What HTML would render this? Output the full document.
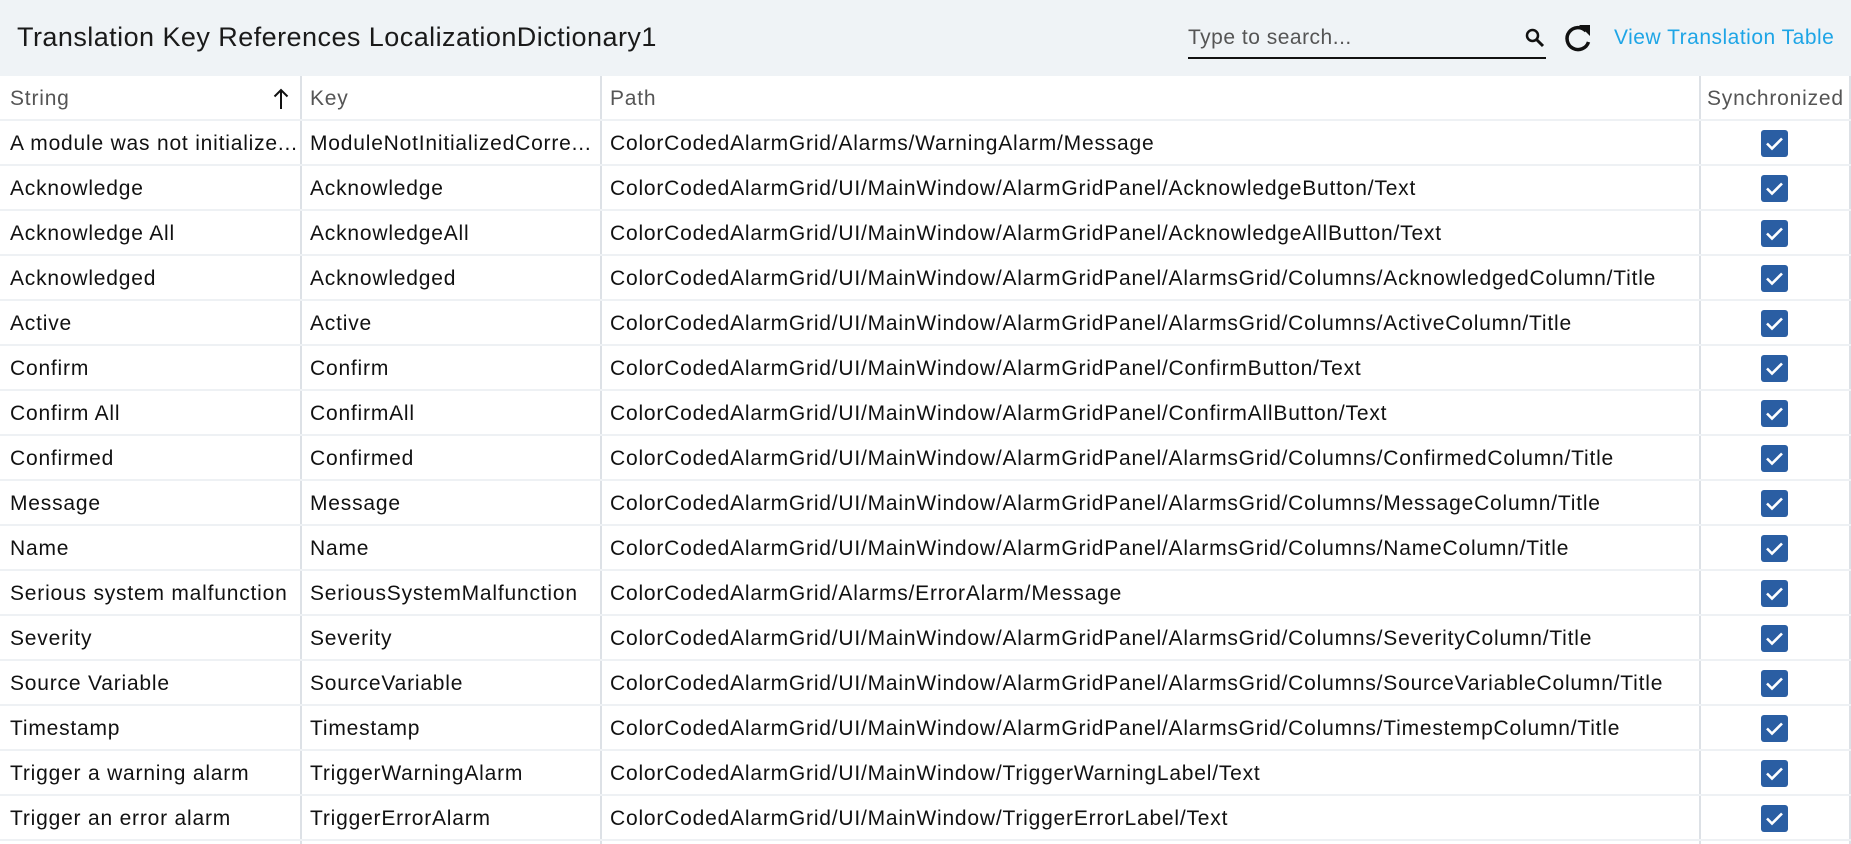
<!DOCTYPE html>
<html><head><meta charset="utf-8"><style>
*{margin:0;padding:0;box-sizing:border-box}
body{width:1851px;height:844px;background:#fff;font-family:"Liberation Sans",sans-serif;color:#111;overflow:hidden;position:relative}
.hdr{position:absolute;left:0;top:0;width:1851px;height:76px;background:#eff3f6}
.title{position:absolute;left:17px;top:22px;font-size:27px;letter-spacing:0.45px;color:#1a1a1a}
.search{position:absolute;left:1188px;top:23px;width:358px;height:36px;border-bottom:2px solid #111;font-size:21px;letter-spacing:0.5px;color:#555;padding-top:3px}
.link{position:absolute;left:1614px;top:26px;font-size:21px;letter-spacing:0.5px;color:#1ea5e6}
.row{position:absolute;left:0;width:1851px;height:45px;border-bottom:2px solid #eef1f4}
.c{position:absolute;top:0;height:45px;line-height:45px;font-size:21px;letter-spacing:0.8px;white-space:nowrap;overflow:hidden}
.h .c{color:#555}
.v{position:absolute;top:76px;width:2px;height:768px;background:#dde1e6}
.cb{position:absolute;left:1761px;top:9px;width:27px;height:27px;background:#2a5ea3;border-radius:3px}
</style></head><body>
<div class="hdr">
<div class="title">Translation Key References LocalizationDictionary1</div>
<div class="search">Type to search...</div>
<svg style="position:absolute;left:1524px;top:27px" width="22" height="22" viewBox="0 0 22 22"><circle cx="8.5" cy="8.5" r="5.5" fill="none" stroke="#111" stroke-width="2.5"/><path d="M12.5 12.5L19 19" stroke="#111" stroke-width="3"/></svg>
<svg style="position:absolute;left:1562px;top:22px" width="32" height="32" viewBox="0 0 32 32"><path d="M24 9A11 11 0 1 0 26.5 20" fill="none" stroke="#111" stroke-width="3.5"/><path d="M17 3L28 3L28 14Z" fill="#111"/></svg>
<div class="link">View Translation Table</div>
</div>
<div class="v" style="left:300px"></div>
<div class="v" style="left:600px"></div>
<div class="v" style="left:1699px"></div>
<div class="v" style="left:1849px"></div>
<div id="g"></div>
<script>
var rows=[["A module was not initialize...","ModuleNotInitializedCorre...","ColorCodedAlarmGrid/Alarms/WarningAlarm/Message"],
["Acknowledge","Acknowledge","ColorCodedAlarmGrid/UI/MainWindow/AlarmGridPanel/AcknowledgeButton/Text"],
["Acknowledge All","AcknowledgeAll","ColorCodedAlarmGrid/UI/MainWindow/AlarmGridPanel/AcknowledgeAllButton/Text"],
["Acknowledged","Acknowledged","ColorCodedAlarmGrid/UI/MainWindow/AlarmGridPanel/AlarmsGrid/Columns/AcknowledgedColumn/Title"],
["Active","Active","ColorCodedAlarmGrid/UI/MainWindow/AlarmGridPanel/AlarmsGrid/Columns/ActiveColumn/Title"],
["Confirm","Confirm","ColorCodedAlarmGrid/UI/MainWindow/AlarmGridPanel/ConfirmButton/Text"],
["Confirm All","ConfirmAll","ColorCodedAlarmGrid/UI/MainWindow/AlarmGridPanel/ConfirmAllButton/Text"],
["Confirmed","Confirmed","ColorCodedAlarmGrid/UI/MainWindow/AlarmGridPanel/AlarmsGrid/Columns/ConfirmedColumn/Title"],
["Message","Message","ColorCodedAlarmGrid/UI/MainWindow/AlarmGridPanel/AlarmsGrid/Columns/MessageColumn/Title"],
["Name","Name","ColorCodedAlarmGrid/UI/MainWindow/AlarmGridPanel/AlarmsGrid/Columns/NameColumn/Title"],
["Serious system malfunction","SeriousSystemMalfunction","ColorCodedAlarmGrid/Alarms/ErrorAlarm/Message"],
["Severity","Severity","ColorCodedAlarmGrid/UI/MainWindow/AlarmGridPanel/AlarmsGrid/Columns/SeverityColumn/Title"],
["Source Variable","SourceVariable","ColorCodedAlarmGrid/UI/MainWindow/AlarmGridPanel/AlarmsGrid/Columns/SourceVariableColumn/Title"],
["Timestamp","Timestamp","ColorCodedAlarmGrid/UI/MainWindow/AlarmGridPanel/AlarmsGrid/Columns/TimestempColumn/Title"],
["Trigger a warning alarm","TriggerWarningAlarm","ColorCodedAlarmGrid/UI/MainWindow/TriggerWarningLabel/Text"],
["Trigger an error alarm","TriggerErrorAlarm","ColorCodedAlarmGrid/UI/MainWindow/TriggerErrorLabel/Text"]];
var h='<div class="row h" style="top:76px"><div class="c" style="left:10px">String</div><svg style="position:absolute;left:273px;top:12px" width="16" height="22" viewBox="0 0 16 22"><path d="M8 21V2M1.5 8.5L8 2L14.5 8.5" fill="none" stroke="#111" stroke-width="2"/></svg><div class="c" style="left:310px">Key</div><div class="c" style="left:610px">Path</div><div class="c" style="left:1707px">Synchronized</div></div>';
var ck='<div class="cb"><svg width="27" height="27" viewBox="0 0 27 27"><path d="M6 13.5L11 18.5L21 8.5" fill="none" stroke="#fff" stroke-width="2.6"/></svg></div>';
rows.forEach(function(r,i){var t=121+i*45;
h+='<div class="row" style="top:'+t+'px"><div class="c" style="left:10px;width:288px">'+r[0]+'</div><div class="c" style="left:310px;width:288px">'+r[1]+'</div><div class="c" style="left:610px">'+r[2]+'</div>'+ck+'</div>';});
document.getElementById('g').innerHTML=h;
</script>
</body></html>
